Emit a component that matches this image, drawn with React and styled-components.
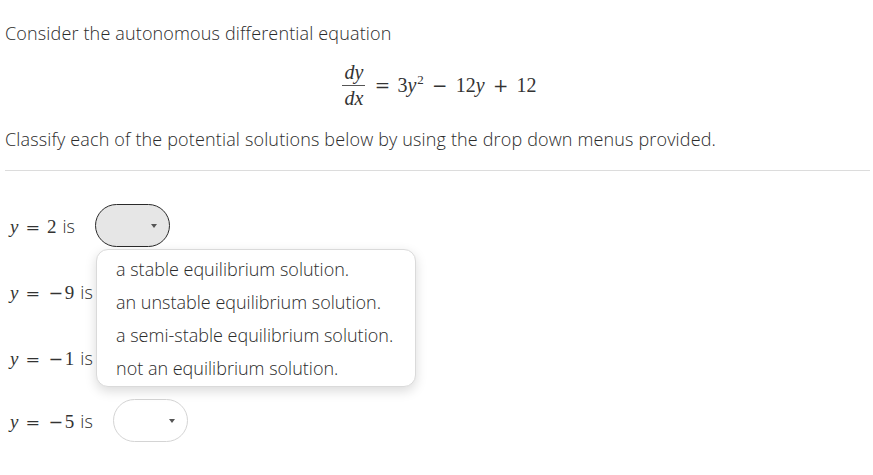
import styled, { createGlobalStyle } from 'styled-components';

const GlobalStyle = createGlobalStyle`
    body {
        margin: 0;
        background: #fff;
        color: #2b2b2b;
        font-family: "Open Sans", "Noto Sans", sans-serif;
    }
`;

const Page = styled.div`
    padding: 22px 3px 0 5px;
    width: 865px;
`;

const Text = styled.p`
    margin: 0;
    font-size: 18px;
    line-height: 22px;
    font-weight: 300;
    letter-spacing: 0.15px;
`;

const Equation = styled.div`
    display: flex;
    justify-content: center;
    align-items: center;
    height: 58px;
    margin: 12px 0 14px 0;
    padding-left: 4px;
    font-family: "Liberation Serif", "DejaVu Serif", serif;
    font-size: 20px;
    color: #333;
`;

const Fraction = styled.span`
    display: inline-flex;
    flex-direction: column;
    align-items: center;
    margin-right: 2px;
`;

const Numerator = styled.span`
    padding: 0 2px 3px;
    line-height: 20px;
    border-bottom: 1px solid #555;
`;

const Denominator = styled.span`
    padding: 2px 2px 0;
    line-height: 20px;
`;

const Var = styled.i`
    font-family: "Liberation Serif", serif;
`;

const Op = styled.span`
    font-family: "DejaVu Serif", serif;
    font-size: 0.92em;
    margin: 0 ${p => p.$space ?? 0.4}em;
`;

const Sup = styled.sup`
    font-size: 0.65em;
    margin-left: 1px;
    vertical-align: 0.55em;
    line-height: 0;
`;

const Divider = styled.hr`
    border: none;
    border-top: 1px solid #dcdcdc;
    margin: 20px 0 33px 0;
`;

const Rows = styled.div`
    display: flex;
    flex-direction: column;
    gap: 23px;
    padding-left: 5px;
`;

const Row = styled.div`
    display: flex;
    align-items: center;
    gap: 20px;
    margin-top: ${p => p.$shift || 0}px;
`;

const Label = styled.span`
    font-size: 18px;
    font-weight: 300;
    white-space: nowrap;
`;

const MathLabel = styled.span`
    font-family: "Liberation Serif", serif;
    font-size: 19px;
    color: #333;
    margin-right: 6px;
`;

const SelectWrap = styled.div`
    position: relative;
`;

const Select = styled.div`
    width: 75px;
    height: 43px;
    box-sizing: border-box;
    border-radius: 22px;
    border: 1px solid ${p => (p.$open ? '#2a2a2a' : '#d4d4d4')};
    background: ${p => (p.$open ? '#e6e6e6' : '#fff')};
    display: flex;
    align-items: center;
    justify-content: flex-end;
    padding-right: 12px;
`;

const Caret = styled.span`
    width: 0;
    height: 0;
    border-left: 3.5px solid transparent;
    border-right: 3.5px solid transparent;
    border-top: 4px solid #555;
`;

const Menu = styled.ul`
    position: absolute;
    top: 45px;
    left: 1px;
    width: 320px;
    box-sizing: border-box;
    margin: 0;
    padding: 2px 0;
    list-style: none;
    background: #fff;
    border: 1px solid #dadada;
    border-radius: 12px;
    box-shadow: 0 4px 12px rgba(0, 0, 0, 0.15);
    z-index: 2;
`;

const MenuItem = styled.li`
    height: 33px;
    display: flex;
    align-items: center;
    padding-left: 19px;
    font-size: 18px;
    font-weight: 300;
`;

const options = [
    'a stable equilibrium solution.',
    'an unstable equilibrium solution.',
    'a semi-stable equilibrium solution.',
    'not an equilibrium solution.',
];

const rows = [
    { value: '2', open: true },
    { value: '9', negative: true },
    { value: '1', negative: true },
    { value: '5', negative: true, shift: -3 },
];

export default function App() {
    return (
        <Page>
            <GlobalStyle />
            <Text>Consider the autonomous differential equation</Text>
            <Equation>
                <Fraction>
                    <Numerator><Var>dy</Var></Numerator>
                    <Denominator><Var>dx</Var></Denominator>
                </Fraction>
                <span>
                    <Op>=</Op>3<Var>y</Var><Sup>2</Sup>
                    <Op $space={0.45}>−</Op>12<Var>y</Var>
                    <Op $space={0.45}>+</Op>12
                </span>
            </Equation>
            <Text>Classify each of the potential solutions below by using the drop down menus provided.</Text>
            <Divider />
            <Rows>
                {rows.map(r => (
                    <Row key={r.value} $shift={r.shift}>
                        <Label>
                            <MathLabel>
                                <Var>y</Var><Op>=</Op>
                                {r.negative && <Op $space={0.09}>−</Op>}
                                {r.value}
                            </MathLabel>
                            is
                        </Label>
                        <SelectWrap>
                            <Select $open={r.open}>
                                <Caret />
                            </Select>
                            {r.open && (
                                <Menu>
                                    {options.map(o => (
                                        <MenuItem key={o}>{o}</MenuItem>
                                    ))}
                                </Menu>
                            )}
                        </SelectWrap>
                    </Row>
                ))}
            </Rows>
        </Page>
    );
}
